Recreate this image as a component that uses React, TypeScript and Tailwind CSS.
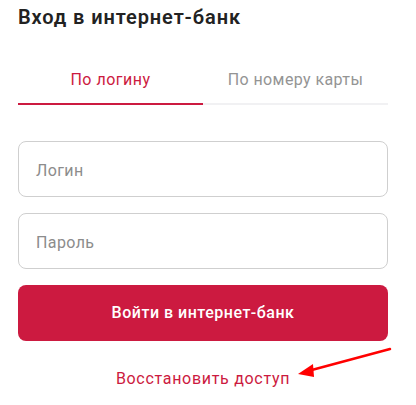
import React from "react";

export default function App() {
  return (
    <div
      className="w-[416px] h-[405px] bg-white px-[18px] pt-[5px] relative overflow-hidden"
      style={{ fontFamily: "Roboto, 'Noto Sans', sans-serif" }}
    >
      <h1 className="text-[20px] leading-[25px] font-semibold text-[#222222] tracking-[0.9px]">
        Вход в интернет-банк
      </h1>
      <div className="mt-[32px] w-[370px] flex">
        <div className="flex-1 h-[43px] flex items-start justify-center border-b-[2px] border-[#cc1a40]">
          <span className="text-[16px] leading-[20px] text-[#cc1a40] pt-[8px] tracking-[0.5px]">По логину</span>
        </div>
        <div className="flex-1 h-[43px] flex items-start justify-center border-b-[2px] border-[#f1f1f3]">
          <span className="text-[16px] leading-[20px] text-[#949494] pt-[8px] tracking-[0.4px]">По номеру карты</span>
        </div>
      </div>
      <div className="mt-[36px] w-[370px] flex flex-col gap-[16px]">
        <div className="h-[56px] rounded-[8px] border border-[#cfcfcf] flex items-center px-[17px] pt-[3px]">
          <span className="text-[16px] text-[#8c8c8c] tracking-[0.4px]">Логин</span>
        </div>
        <div className="h-[56px] rounded-[8px] border border-[#cfcfcf] flex items-center px-[17px] pt-[3px]">
          <span className="text-[16px] text-[#8c8c8c] tracking-[0.4px]">Пароль</span>
        </div>
        <div className="h-[56px] rounded-[8px] bg-[#cc1a40] flex items-center justify-center">
          <span className="text-[16px] font-medium text-white tracking-[0.5px]">Войти в интернет-банк</span>
        </div>
      </div>
      <div className="mt-[26px] w-[370px] flex justify-center">
        <span className="text-[16px] text-[#cc1a40] tracking-[0.7px]">Восстановить доступ</span>
      </div>
      <svg
        className="absolute left-0 top-0 pointer-events-none"
        width="416"
        height="405"
        viewBox="0 0 416 405"
      >
        <line x1="390" y1="349" x2="308" y2="371" stroke="#ff0000" strokeWidth="2.5" strokeLinecap="round" />
        <polygon points="298,374 313,364 314,377" fill="#ff0000" />
      </svg>
    </div>
  );
}
